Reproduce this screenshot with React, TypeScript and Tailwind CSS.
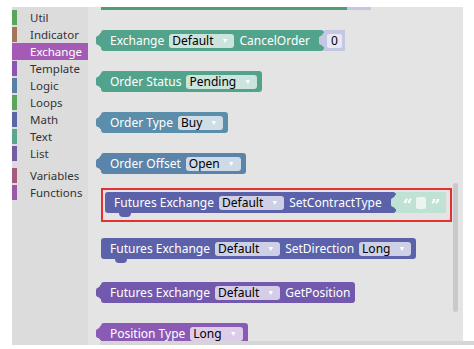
import React from 'react';

const categories = [
  { name: 'Util', stripe: 'bg-[#5ba55b]' },
  { name: 'Indicator', stripe: 'bg-[#a5745b]' },
  { name: 'Exchange', stripe: 'bg-[#a55bb5]', selected: true },
  { name: 'Template', stripe: 'bg-[#8e55b0]' },
  { name: 'Logic', stripe: 'bg-[#5b80a5]' },
  { name: 'Loops', stripe: 'bg-[#5ba55b]' },
  { name: 'Math', stripe: 'bg-[#5b67a5]' },
  { name: 'Text', stripe: 'bg-[#5ba58c]' },
  { name: 'List', stripe: 'bg-[#745ba5]' },
];

const extraCategories = [
  { name: 'Variables', stripe: 'bg-[#a55b80]' },
  { name: 'Functions', stripe: 'bg-[#995ba5]' },
];

function Tab({ fill }: { fill: string }) {
  return (
    <svg width="6" height="14" viewBox="0 0 6 14" className="absolute left-[-5px] top-[3px]">
      <path d="M6 0 V14 H4 C4 11.5 0 12.5 0 10 V5 C0 2.5 4 3 4 0 Z" fill={fill} />
    </svg>
  );
}

function Dropdown({ label }: { label: string }) {
  return (
    <span className="flex items-center h-[14px] rounded-[3px] bg-white/70 pl-[3px] pr-[6px] text-black">
      <span className="leading-none">{label}</span>
      <span className="ml-[8px] text-[7px] leading-none text-white">▼</span>
    </span>
  );
}

function Block({
  color,
  tab,
  bump,
  children,
}: {
  color: string;
  tab?: string;
  bump?: string;
  children: React.ReactNode;
}) {
  return (
    <div className={`relative self-start flex items-center h-[21px] pl-[9px] pr-[5px] gap-[5px] text-white text-[12px] rounded-[3px] ${color}`}>
      {tab && <Tab fill={tab} />}
      {children}
      {bump && <span className={`absolute left-[14px] bottom-[-4px] w-[12px] h-[5px] rounded-b-[4px] ${bump}`} />}
    </div>
  );
}

function NumberShadow() {
  return (
    <div className="relative flex items-center h-[21px] px-[3px] bg-[#c4c7e2]">
      <Tab fill="#c4c7e2" />
      <span className="flex items-center justify-center h-[14px] w-[15px] rounded-[2px] bg-[#e7e8f4] text-black text-[12px]">0</span>
    </div>
  );
}

function StringShadow() {
  return (
    <div className="relative flex items-center h-[21px] pl-[7px] pr-[6px] gap-[4px] bg-[#c0e2d4] text-white font-bold text-[17px] font-['DejaVu_Serif',serif]">
      <Tab fill="#c0e2d4" />
      <span className="leading-none mt-[5px]">“</span>
      <span className="w-[10px] h-[12px] rounded-[2px] bg-[#eaf5f0]" />
      <span className="leading-none mt-[5px]">”</span>
    </div>
  );
}

export default function App() {
  return (
    <div className="relative w-[474px] h-[349px] bg-white overflow-hidden font-['Noto_Sans',sans-serif]">
      <div className="ml-[12px] pt-[7px] flex h-[345px]">
        {/* Toolbox */}
        <div className="w-[76px] bg-[#dcdcdc] pt-[2px] text-[11.5px] text-[#333]">
          {categories.map((c) => (
            <div
              key={c.name}
              className={`flex items-center h-[17px] ${c.selected ? 'bg-[#a55bb5] text-white' : ''}`}
            >
              <span className={`w-[5px] h-[15px] ${c.stripe}`} />
              <span className="ml-[13px]">{c.name}</span>
            </div>
          ))}
          <div className="h-[5px]" />
          {extraCategories.map((c) => (
            <div key={c.name} className="flex items-center h-[17px]">
              <span className={`w-[5px] h-[15px] ${c.stripe}`} />
              <span className="ml-[13px]">{c.name}</span>
            </div>
          ))}
        </div>

        {/* Flyout */}
        <div className="relative w-[375px] bg-[#e4e4e4] pl-[13px] flex flex-col">
          <div className="flex h-[3px]">
            <span className="w-[246px] bg-[#4f9e74]" />
            <span className="w-[24px] bg-[#c4c7e2]" />
          </div>

          <div className="mt-[20px] flex self-start">
            <Block color="bg-[#52a38c]" tab="#52a38c">
              <span>Exchange</span>
              <Dropdown label="Default" />
              <span className="mr-[9px]">CancelOrder</span>
            </Block>
            <NumberShadow />
          </div>

          <div className="mt-[20px] flex">
            <Block color="bg-[#52a38c]" tab="#52a38c">
              <span>Order Status</span>
              <Dropdown label="Pending" />
            </Block>
          </div>

          <div className="mt-[20px] flex">
            <Block color="bg-[#5a8eab]" tab="#5a8eab">
              <span>Order Type</span>
              <Dropdown label="Buy" />
            </Block>
          </div>

          <div className="mt-[20px] flex">
            <Block color="bg-[#5a84aa]" tab="#5a84aa">
              <span>Order Offset</span>
              <Dropdown label="Open" />
            </Block>
          </div>

          <div className="mt-[14px] w-[351px] h-[34px] border-2 border-[#e3312f] pl-[2px] pt-[2px] flex items-start">
            <Block color="bg-[#5b62aa]" bump="bg-[#5b62aa]">
              <span>Futures Exchange</span>
              <Dropdown label="Default" />
              <span className="mr-[9px]">SetContractType</span>
            </Block>
            <StringShadow />
          </div>

          <div className="mt-[16px] flex">
            <Block color="bg-[#5b62aa]" bump="bg-[#5b62aa]">
              <span>Futures Exchange</span>
              <Dropdown label="Default" />
              <span>SetDirection</span>
              <Dropdown label="Long" />
            </Block>
          </div>

          <div className="mt-[23px] flex">
            <Block color="bg-[#7259ad]" tab="#7259ad">
              <span>Futures Exchange</span>
              <Dropdown label="Default" />
              <span>GetPosition</span>
            </Block>
          </div>

          <div className="mt-[20px] flex">
            <Block color="bg-[#8b5ab5]" tab="#8b5ab5">
              <span>Position Type</span>
              <Dropdown label="Long" />
            </Block>
          </div>

          {/* vertical scrollbar */}
          <span className="absolute left-[365px] top-[176px] w-[5px] h-[129px] rounded-[3px] bg-[#c9c9c9]" />
        </div>
      </div>
      {/* horizontal scrollbar strip */}
      <span className="absolute left-[100px] top-[341px] w-[374px] h-[4px] bg-[#d6d6d6]" />
    </div>
  );
}
